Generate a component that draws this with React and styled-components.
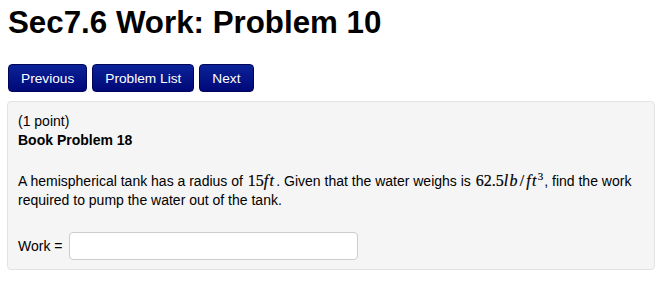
import React from "react";
import styled, { createGlobalStyle } from "styled-components";

const Global = createGlobalStyle`
  html, body { margin: 0; padding: 0; background: #fff; }
  body {
    font-family: "Liberation Sans", Arial, sans-serif;
    font-size: 14px;
    color: #000;
  }
`;

const Page = styled.div`
  padding: 0 12px 0 7px;
`;

const Title = styled.h1`
  margin: 0;
  padding: 5px 0 0 1px;
  font-size: 31.3px;
  line-height: 36px;
  font-weight: bold;
  color: #000;
`;

const Nav = styled.div`
  display: flex;
  gap: 5px;
  margin: 23px 0 9px 1px;
`;

const NavButton = styled.button`
  height: 28px;
  padding: 0 12px;
  border: 1px solid #00055a;
  border-radius: 4px;
  background: linear-gradient(#0b2398, #000878);
  color: #fff;
  font-family: "Liberation Sans", Arial, sans-serif;
  font-size: 13.7px;
  cursor: pointer;
`;

const Panel = styled.div`
  background: #f5f5f5;
  border: 1px solid #e3e3e3;
  border-radius: 4px;
  padding: 10px 10px 9px;
`;

const Line = styled.div`
  line-height: 19px;
  font-weight: ${(p) => (p.$bold ? "bold" : "normal")};
`;

const Para = styled.p`
  margin: 22px 0 22px;
  line-height: 19px;
`;

const Math = styled.span`
  font-family: "Liberation Serif", "Times New Roman", serif;
  font-size: 16px;
  line-height: 1;
  margin: 0 1px;
  -webkit-text-stroke: 0.2px #000;
`;

const Var = styled.i`
  font-family: "Liberation Serif", "Times New Roman", serif;
  font-style: italic;
  letter-spacing: 1.3px;
`;

const Slash = styled.span`
  margin: 0 2px 0 1px;
`;

const Sup = styled.sup`
  font-size: 11px;
  line-height: 0;
`;

const AnswerRow = styled.div`
  display: flex;
  align-items: center;
  gap: 7px;
`;

const Input = styled.input`
  width: 289px;
  height: 28px;
  box-sizing: border-box;
  border: 1px solid #ccc;
  border-radius: 4px;
  background: #fff;
`;

export default function App() {
  return (
    <Page>
      <Global />
      <Title>Sec7.6 Work: Problem 10</Title>
      <Nav>
        <NavButton>Previous</NavButton>
        <NavButton>Problem List</NavButton>
        <NavButton>Next</NavButton>
      </Nav>
      <Panel>
        <Line>(1 point)</Line>
        <Line $bold>Book Problem 18</Line>
        <Para>
          A hemispherical tank has a radius of{" "}
          <Math>
            15<Var>ft</Var>
          </Math>
          . Given that the water weighs is{" "}
          <Math>
            62.5<Var>lb</Var>
            <Slash>/</Slash>
            <Var>ft</Var>
            <Sup>3</Sup>
          </Math>
          , find the work required to pump the water out of the tank.
        </Para>
        <AnswerRow>
          Work =
          <Input type="text" />
        </AnswerRow>
      </Panel>
    </Page>
  );
}
